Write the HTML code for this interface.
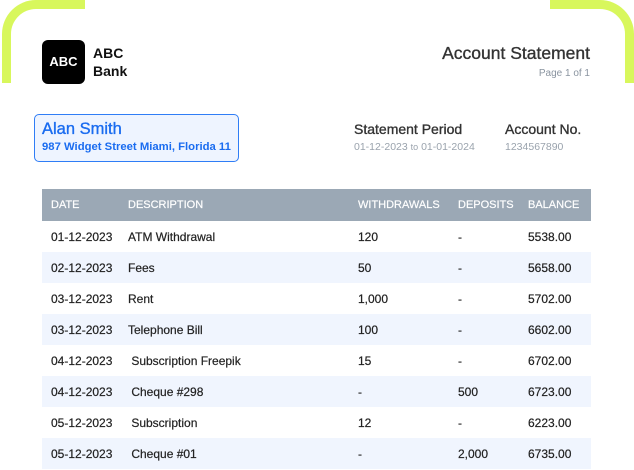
<!DOCTYPE html>
<html><head><meta charset="utf-8"><style>
*{margin:0;padding:0;box-sizing:border-box}
body{width:634px;height:470px;background:#fff;font-family:"Liberation Sans",sans-serif;position:relative;overflow:hidden;color:#222}
.br{position:absolute;border:9px solid #d8f75c;}
.a{position:absolute;white-space:nowrap}
.m{-webkit-text-stroke:0.35px currentColor}
table{position:absolute;left:42px;top:189px;width:549px;border-collapse:collapse;font-size:12px}
th{background:#9ba8b5;color:#fff;font-weight:normal;text-align:left;font-size:11px;height:32px;padding:0;-webkit-text-stroke:0.2px #fff}
td{height:31px;padding:0;-webkit-text-stroke:0.2px #222}
tr:nth-child(odd) td{background:#f0f5fe}
</style></head><body>
<div class="br" style="left:2px;top:0;width:120px;height:110px;border-right:none;border-bottom:none;border-top-left-radius:34px"></div>
<div style="position:absolute;left:85px;top:0;width:60px;height:90px;background:#fff"></div>
<div class="br" style="left:500px;top:0;width:134px;height:110px;border-left:none;border-bottom:none;border-top-right-radius:34px;right:0"></div>
<div style="position:absolute;left:490px;top:0;width:60px;height:90px;background:#fff"></div>
<div style="position:absolute;left:0;top:83px;width:634px;height:40px;background:#fff"></div>

<div style="position:absolute;left:42px;top:40px;width:43px;height:44px;background:#000;border-radius:6px;color:#fff;font-weight:bold;font-size:13px;text-align:center;line-height:44px">ABC</div>
<div class="a" style="left:93px;top:44px;font-weight:bold;font-size:14px;line-height:18px;color:#111">ABC<br>Bank</div>
<div class="a m" style="right:44px;top:43px;font-size:17.5px;color:#333">Account Statement</div>
<div class="a" style="right:44px;top:68px;font-size:10px;color:#8a94a0">Page 1 of 1</div>

<div style="position:absolute;left:34px;top:114px;width:205px;height:48px;border:1px solid #2f7df6;border-radius:5px;background:#eef4ff"></div>
<div class="a m" style="left:42px;top:120px;font-size:16.5px;color:#1a6cf0">Alan Smith</div>
<div class="a" style="left:42px;top:141px;font-size:11.3px;font-weight:bold;color:#1a6cf0">987 Widget Street Miami, Florida 11</div>

<div class="a m" style="left:354px;top:121px;font-size:14px;color:#333">Statement Period</div>
<div class="a" style="left:354px;top:141px;font-size:10.5px;color:#9aa3ad">01-12-2023 <span style="font-size:9px">to</span> 01-01-2024</div>
<div class="a m" style="left:505px;top:121px;font-size:14px;color:#333">Account No.</div>
<div class="a" style="left:505px;top:141px;font-size:10.5px;color:#9aa3ad">1234567890</div>

<table>
<colgroup><col style="width:86px"><col style="width:230px"><col style="width:100px"><col style="width:70px"><col></colgroup>
<tr><th style="padding-left:9px">DATE</th><th>DESCRIPTION</th><th>WITHDRAWALS</th><th>DEPOSITS</th><th>BALANCE</th></tr>
<tr><td style="padding-left:9px">01-12-2023</td><td>ATM Withdrawal</td><td>120</td><td>-</td><td>5538.00</td></tr>
<tr><td style="padding-left:9px">02-12-2023</td><td>Fees</td><td>50</td><td>-</td><td>5658.00</td></tr>
<tr><td style="padding-left:9px">03-12-2023</td><td>Rent</td><td>1,000</td><td>-</td><td>5702.00</td></tr>
<tr><td style="padding-left:9px">03-12-2023</td><td>Telephone Bill</td><td>100</td><td>-</td><td>6602.00</td></tr>
<tr><td style="padding-left:9px">04-12-2023</td><td>&nbsp;Subscription Freepik</td><td>15</td><td>-</td><td>6702.00</td></tr>
<tr><td style="padding-left:9px">04-12-2023</td><td>&nbsp;Cheque #298</td><td>-</td><td>500</td><td>6723.00</td></tr>
<tr><td style="padding-left:9px">05-12-2023</td><td>&nbsp;Subscription</td><td>12</td><td>-</td><td>6223.00</td></tr>
<tr><td style="padding-left:9px">05-12-2023</td><td>&nbsp;Cheque #01</td><td>-</td><td>2,000</td><td>6735.00</td></tr>
</table>
</body></html>
